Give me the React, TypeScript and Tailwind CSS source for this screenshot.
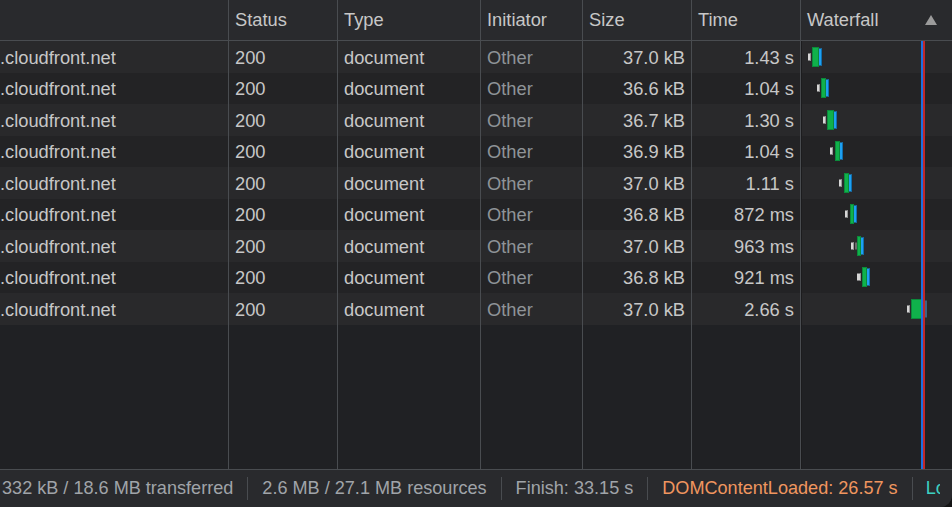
import React from "react";

type Bar = { left: number; width: number };
type Row = {
  size: string;
  time: string;
  gray: Bar;
  dark?: Bar;
  green: Bar;
  blue: Bar;
  fadedBlue?: boolean;
};

const rows: Row[] = [
  { size: "37.0 kB", time: "1.43 s", gray: { left: 6.3, width: 3 }, green: { left: 10, width: 6.7 }, blue: { left: 16.7, width: 3 } },
  { size: "36.6 kB", time: "1.04 s", gray: { left: 15, width: 3 }, green: { left: 19, width: 4.7 }, blue: { left: 23.7, width: 3 } },
  { size: "36.7 kB", time: "1.30 s", gray: { left: 21, width: 3 }, green: { left: 25, width: 6.7 }, blue: { left: 31.7, width: 3 } },
  { size: "36.9 kB", time: "1.04 s", gray: { left: 28.3, width: 3 }, green: { left: 32.7, width: 5 }, blue: { left: 37.7, width: 3 } },
  { size: "37.0 kB", time: "1.11 s", gray: { left: 37.3, width: 3 }, green: { left: 41.7, width: 5 }, blue: { left: 46.7, width: 3 } },
  { size: "36.8 kB", time: "872 ms", gray: { left: 43.3, width: 3 }, green: { left: 47.7, width: 4.6 }, blue: { left: 52.3, width: 3 } },
  { size: "37.0 kB", time: "963 ms", gray: { left: 49.3, width: 3.2 }, dark: { left: 52.5, width: 2 }, green: { left: 55, width: 3.7 }, blue: { left: 58.7, width: 3 } },
  { size: "36.8 kB", time: "921 ms", gray: { left: 55.3, width: 3.4 }, green: { left: 59.7, width: 5 }, blue: { left: 64.7, width: 3 } },
  { size: "37.0 kB", time: "2.66 s", gray: { left: 104.7, width: 3.3 }, green: { left: 109, width: 12.3 }, blue: { left: 121.3, width: 3.7 }, fadedBlue: true },
];

const cols = "grid grid-cols-[229px_109px_143px_102px_109px_109px_1fr]";
const cell = "border-r border-[#494c50] h-full flex items-center px-[6px] whitespace-nowrap overflow-hidden";

function Waterfall({ row }: { row: Row }) {
  return (
    <div className="relative h-full border-l border-[#1c1c1e]">
      <div
        className="absolute top-1/2 -translate-y-1/2 h-[7px] bg-[#d6d6d6] border-r border-[#9a9a9a]"
        style={{ left: row.gray.left, width: row.gray.width }}
      />
      {row.dark && (
        <div
          className="absolute top-1/2 -translate-y-1/2 h-[7px] bg-[#6b6b6b]"
          style={{ left: row.dark.left, width: row.dark.width }}
        />
      )}
      <div
        className="absolute top-1/2 -translate-y-1/2 h-[20px] bg-[#10b14b] border border-[#0b8a3b]"
        style={{ left: row.green.left, width: row.green.width }}
      />
      <div
        className={`absolute top-1/2 -translate-y-1/2 h-[17px] ${
          row.fadedBlue ? "bg-[#3f6284]" : "bg-[#1ea0f2] border-r border-[#0f6fae]"
        }`}
        style={{ left: row.blue.left, width: row.blue.width }}
      />
    </div>
  );
}

function Divider() {
  return <div className="w-px h-[23px] bg-[#494c50]" />;
}

export default function App() {
  return (
    <div className="w-[952px] h-[507px] bg-[#141414]">
      <div className="w-full h-full flex flex-col bg-[#202124] rounded-br-[12px] overflow-hidden font-['Liberation_Sans',Arial,sans-serif] text-[18.3px] text-[#c7c7c7]">
        {/* header */}
        <div className={`${cols} h-[41px] shrink-0 bg-[#292a2d] border-b border-[#494c50]`}>
          <div className={cell} />
          <div className={cell}>Status</div>
          <div className={cell}>Type</div>
          <div className={cell}>Initiator</div>
          <div className={cell}>Size</div>
          <div className={cell}>Time</div>
          <div className="h-full flex items-center justify-between pl-[6px] pr-[15px]">
            <span>Waterfall</span>
            <svg width="12" height="10" viewBox="0 0 12 10">
              <polygon points="6,0 12,10 0,10" fill="#9b9b9b" />
            </svg>
          </div>
        </div>

        {/* body */}
        <div className="relative flex-1 flex flex-col">
          {rows.map((row, i) => (
            <div
              key={i}
              className={`${cols} h-[31.5px] shrink-0 ${i % 2 === 0 ? "bg-[#29292b]" : "bg-[#232325]"}`}
            >
              <div className={`${cell} pl-0 pt-px`}>.cloudfront.net</div>
              <div className={`${cell} pt-px`}>200</div>
              <div className={`${cell} pt-px`}>document</div>
              <div className={`${cell} pt-px text-[#8f9398]`}>Other</div>
              <div className={`${cell} pt-px justify-end`}>{row.size}</div>
              <div className={`${cell} pt-px justify-end`}>{row.time}</div>
              <Waterfall row={row} />
            </div>
          ))}
          <div className={`${cols} flex-1`}>
            <div className={cell} />
            <div className={cell} />
            <div className={cell} />
            <div className={cell} />
            <div className={cell} />
            <div className={cell} />
            <div className="h-full border-l border-[#1c1c1e]" />
          </div>
          <div className="absolute top-0 bottom-0 left-[921px] w-[2px] bg-[#1c6fe0]" />
          <div className="absolute top-0 bottom-0 left-[923px] w-[2px] bg-[#c0282b]" />
        </div>

        {/* footer */}
        <div className="h-[38px] shrink-0 bg-[#292a2d] border-t border-[#494c50] flex items-center text-[18.1px] text-[#a0a4a9] whitespace-nowrap">
          <span className="pl-[2px] pr-[14px]">332 kB / 18.6 MB transferred</span>
          <Divider />
          <span className="px-[14px]">2.6 MB / 27.1 MB resources</span>
          <Divider />
          <span className="px-[14px]">Finish: 33.15 s</span>
          <Divider />
          <span className="px-[14px] text-[#f0965f]">DOMContentLoaded: 26.57 s</span>
          <Divider />
          <span className="ml-[13px] w-[14px] overflow-hidden text-[#3cd0c1]">Load</span>
        </div>
      </div>
    </div>
  );
}
